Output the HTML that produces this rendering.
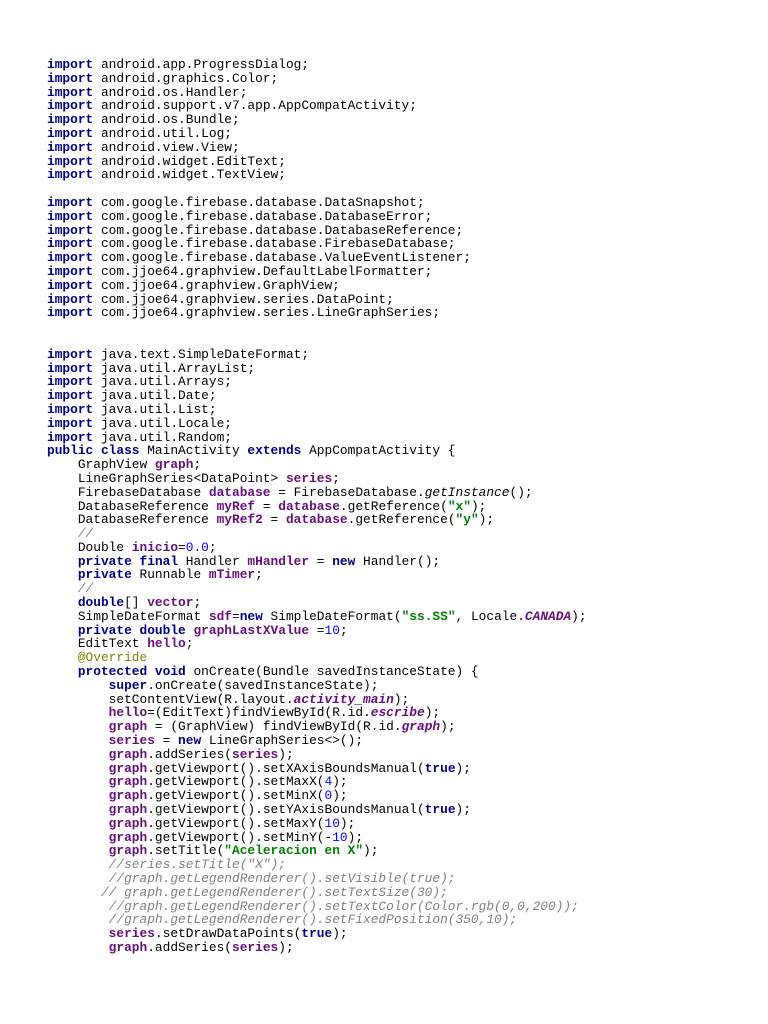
<!DOCTYPE html>
<html><head><meta charset="utf-8"><style>
html,body{margin:0;padding:0;background:#fff;width:768px;height:1024px;overflow:hidden}
pre{margin:0;position:absolute;left:47px;top:58px;font-family:"Liberation Mono","Courier New",monospace;font-size:12.85px;line-height:13.8px;color:#000}
.k{color:#000080;font-weight:bold}
.f{color:#660e7a;font-weight:bold}
.s{color:#008000;font-weight:bold}
.n{color:#0000ff}
.c{color:#808080;font-style:italic}
.a{color:#808000}
.i{font-style:italic}
.fi{color:#660e7a;font-weight:bold;font-style:italic}
</style></head><body><pre><span class="k">import</span> android.app.ProgressDialog;
<span class="k">import</span> android.graphics.Color;
<span class="k">import</span> android.os.Handler;
<span class="k">import</span> android.support.v7.app.AppCompatActivity;
<span class="k">import</span> android.os.Bundle;
<span class="k">import</span> android.util.Log;
<span class="k">import</span> android.view.View;
<span class="k">import</span> android.widget.EditText;
<span class="k">import</span> android.widget.TextView;

<span class="k">import</span> com.google.firebase.database.DataSnapshot;
<span class="k">import</span> com.google.firebase.database.DatabaseError;
<span class="k">import</span> com.google.firebase.database.DatabaseReference;
<span class="k">import</span> com.google.firebase.database.FirebaseDatabase;
<span class="k">import</span> com.google.firebase.database.ValueEventListener;
<span class="k">import</span> com.jjoe64.graphview.DefaultLabelFormatter;
<span class="k">import</span> com.jjoe64.graphview.GraphView;
<span class="k">import</span> com.jjoe64.graphview.series.DataPoint;
<span class="k">import</span> com.jjoe64.graphview.series.LineGraphSeries;


<span class="k">import</span> java.text.SimpleDateFormat;
<span class="k">import</span> java.util.ArrayList;
<span class="k">import</span> java.util.Arrays;
<span class="k">import</span> java.util.Date;
<span class="k">import</span> java.util.List;
<span class="k">import</span> java.util.Locale;
<span class="k">import</span> java.util.Random;
<span class="k">public class</span> MainActivity <span class="k">extends</span> AppCompatActivity {
    GraphView <span class="f">graph</span>;
    LineGraphSeries&lt;DataPoint&gt; <span class="f">series</span>;
    FirebaseDatabase <span class="f">database</span> = FirebaseDatabase.<span class="i">getInstance</span>();
    DatabaseReference <span class="f">myRef</span> = <span class="f">database</span>.getReference(<span class="s">"x"</span>);
    DatabaseReference <span class="f">myRef2</span> = <span class="f">database</span>.getReference(<span class="s">"y"</span>);
    <span class="c">//</span>
    Double <span class="f">inicio</span>=<span class="n">0.0</span>;
    <span class="k">private final</span> Handler <span class="f">mHandler</span> = <span class="k">new</span> Handler();
    <span class="k">private</span> Runnable <span class="f">mTimer</span>;
    <span class="c">//</span>
    <span class="k">double</span>[] <span class="f">vector</span>;
    SimpleDateFormat <span class="f">sdf</span>=<span class="k">new</span> SimpleDateFormat(<span class="s">"ss.SS"</span>, Locale.<span class="fi">CANADA</span>);
    <span class="k">private double</span> <span class="f">graphLastXValue</span> =<span class="n">10</span>;
    EditText <span class="f">hello</span>;
    <span class="a">@Override</span>
    <span class="k">protected void</span> onCreate(Bundle savedInstanceState) {
        <span class="k">super</span>.onCreate(savedInstanceState);
        setContentView(R.layout.<span class="fi">activity_main</span>);
        <span class="f">hello</span>=(EditText)findViewById(R.id.<span class="fi">escribe</span>);
        <span class="f">graph</span> = (GraphView) findViewById(R.id.<span class="fi">graph</span>);
        <span class="f">series</span> = <span class="k">new</span> LineGraphSeries&lt;&gt;();
        <span class="f">graph</span>.addSeries(<span class="f">series</span>);
        <span class="f">graph</span>.getViewport().setXAxisBoundsManual(<span class="k">true</span>);
        <span class="f">graph</span>.getViewport().setMaxX(<span class="n">4</span>);
        <span class="f">graph</span>.getViewport().setMinX(<span class="n">0</span>);
        <span class="f">graph</span>.getViewport().setYAxisBoundsManual(<span class="k">true</span>);
        <span class="f">graph</span>.getViewport().setMaxY(<span class="n">10</span>);
        <span class="f">graph</span>.getViewport().setMinY(-<span class="n">10</span>);
        <span class="f">graph</span>.setTitle(<span class="s">"Aceleracion en X"</span>);
        <span class="c">//series.setTitle("X");</span>
        <span class="c">//graph.getLegendRenderer().setVisible(true);</span>
       <span class="c">// graph.getLegendRenderer().setTextSize(30);</span>
        <span class="c">//graph.getLegendRenderer().setTextColor(Color.rgb(0,0,200));</span>
        <span class="c">//graph.getLegendRenderer().setFixedPosition(350,10);</span>
        <span class="f">series</span>.setDrawDataPoints(<span class="k">true</span>);
        <span class="f">graph</span>.addSeries(<span class="f">series</span>);</pre></body></html>
